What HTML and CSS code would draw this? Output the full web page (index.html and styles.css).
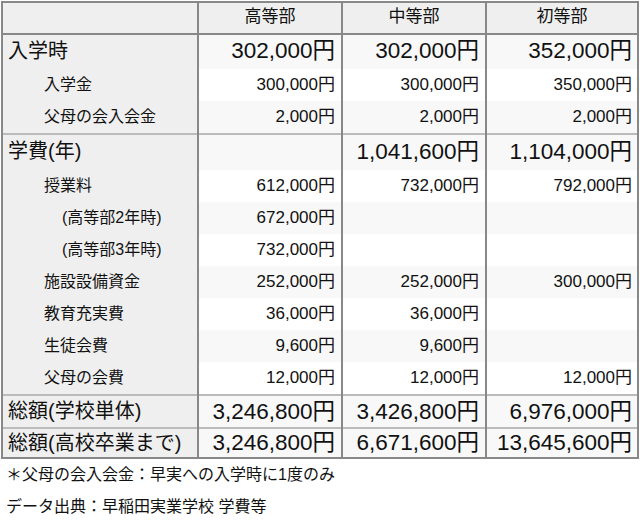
FILE: index.html
```html
<!DOCTYPE html>
<html lang="ja">
<head>
<meta charset="utf-8">
<title>学費</title>
<link rel="stylesheet" href="styles.css">
</head>
<body>
<table class="fees">
  <colgroup>
    <col class="c-label">
    <col class="c-val">
    <col class="c-val">
    <col class="c-last">
  </colgroup>
  <thead>
    <tr class="head">
      <th class="corner"></th>
      <th>高等部</th>
      <th>中等部</th>
      <th>初等部</th>
    </tr>
  </thead>
  <tbody class="group">
    <tr class="g-row shade">
      <th class="lbl lbl-g">入学時</th>
      <td class="big">302,000円</td>
      <td class="big">302,000円</td>
      <td class="big">352,000円</td>
    </tr>
    <tr class="s-row">
      <th class="lbl lbl-s">入学金</th>
      <td>300,000円</td>
      <td>300,000円</td>
      <td>350,000円</td>
    </tr>
    <tr class="s-row shade">
      <th class="lbl lbl-s">父母の会入会金</th>
      <td>2,000円</td>
      <td>2,000円</td>
      <td>2,000円</td>
    </tr>
  </tbody>
  <tbody class="group">
    <tr class="g-row g-tall shade">
      <th class="lbl lbl-g">学費(年)</th>
      <td class="big"></td>
      <td class="big">1,041,600円</td>
      <td class="big">1,104,000円</td>
    </tr>
    <tr class="s-row">
      <th class="lbl lbl-s">授業料</th>
      <td>612,000円</td>
      <td>732,000円</td>
      <td>792,000円</td>
    </tr>
    <tr class="s-row shade">
      <th class="lbl lbl-n">(高等部2年時)</th>
      <td>672,000円</td>
      <td></td>
      <td></td>
    </tr>
    <tr class="s-row">
      <th class="lbl lbl-n">(高等部3年時)</th>
      <td>732,000円</td>
      <td></td>
      <td></td>
    </tr>
    <tr class="s-row shade">
      <th class="lbl lbl-s">施設設備資金</th>
      <td>252,000円</td>
      <td>252,000円</td>
      <td>300,000円</td>
    </tr>
    <tr class="s-row">
      <th class="lbl lbl-s">教育充実費</th>
      <td>36,000円</td>
      <td>36,000円</td>
      <td></td>
    </tr>
    <tr class="s-row shade">
      <th class="lbl lbl-s">生徒会費</th>
      <td>9,600円</td>
      <td>9,600円</td>
      <td></td>
    </tr>
    <tr class="s-row">
      <th class="lbl lbl-s">父母の会費</th>
      <td>12,000円</td>
      <td>12,000円</td>
      <td>12,000円</td>
    </tr>
  </tbody>
  <tbody class="group">
    <tr class="t-row shade">
      <th class="lbl lbl-g">総額(学校単体)</th>
      <td class="big">3,246,800円</td>
      <td class="big">3,426,800円</td>
      <td class="big">6,976,000円</td>
    </tr>
  </tbody>
  <tbody class="group">
    <tr class="t-row t-last shade">
      <th class="lbl lbl-g">総額(高校卒業まで)</th>
      <td class="big">3,246,800円</td>
      <td class="big">6,671,600円</td>
      <td class="big">13,645,600円</td>
    </tr>
  </tbody>
</table>
<p class="note">＊父母の会入会金：早実への入学時に1度のみ</p>
<p class="note">データ出典：早稲田実業学校 学費等</p>
</body>
</html>
```

FILE: styles.css
```css
html, body {
  margin: 0;
  padding: 0;
  background: #ffffff;
}

body {
  width: 640px;
  font-family: "Liberation Sans", "Noto Sans CJK JP", sans-serif;
  color: #111111;
}

.fees {
  width: 638px;
  border-collapse: collapse;
  table-layout: fixed;
  border: 2px solid #888888;
  margin-left: 1px;
  margin-top: 1px;
}

.c-label { width: 196px; }
.c-val { width: 144px; }

.fees th,
.fees td {
  padding: 0;
  line-height: 1.15;
  border-left: 2px solid #888888;
  border-right: 2px solid #888888;
  white-space: nowrap;
}

.fees .head th {
  height: 28px;
  padding-bottom: 2px;
  background: #efefef;
  font-weight: normal;
  font-size: 17px;
  text-align: center;
  border-bottom: 2px solid #888888;
}

.fees .group + .group tr:first-child th,
.fees .group + .group tr:first-child td {
  border-top: 2px solid #bbbbbb;
}

.fees .lbl {
  background: #efefef;
  font-weight: normal;
  text-align: left;
}

.fees .lbl-g {
  font-size: 20px;
  padding-left: 5px;
}

.fees .lbl-s {
  font-size: 16px;
  padding-left: 41px;
}

.fees .lbl-n {
  font-size: 16px;
  padding-left: 59px;
}

.fees td {
  text-align: right;
  padding-right: 6px;
  font-size: 17px;
  background: #ffffff;
}

.fees td.big {
  font-size: 22.5px;
}

.fees tr.shade td {
  background: #f8f8f8;
}

.fees .g-row th, .fees .g-row td { height: 32px; padding-bottom: 2px; }
.fees .g-tall th, .fees .g-tall td { height: 33px; }
.fees .s-row th, .fees .s-row td { height: 32px; }
.fees .t-row th, .fees .t-row td { height: 31px; }
.fees .t-last th, .fees .t-last td { height: 28px; }

.fees tr td:last-child {
  padding-right: 5px;
}

.note {
  margin: 0;
  height: 32px;
  line-height: 32px;
  padding-left: 6px;
  font-size: 16px;
}
```
